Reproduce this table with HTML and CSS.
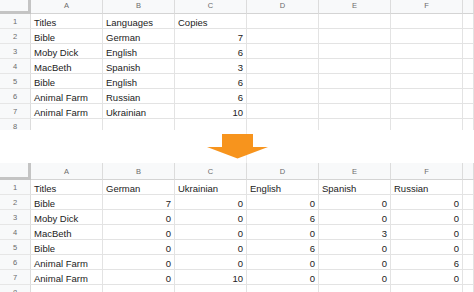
FILE: index.html
```html
<!DOCTYPE html>
<html>
<head>
<meta charset="utf-8">
<link rel="stylesheet" href="styles.css">
</head>
<body>
<div class="page">
  <div class="sheet sheet-top">
    <div class="hd corner"></div>
    <div class="hd col">A</div><div class="hd col">B</div><div class="hd col">C</div><div class="hd col">D</div><div class="hd col">E</div><div class="hd col">F</div><div class="hd col"></div>

    <div class="rn">1</div><div class="c">Titles</div><div class="c">Languages</div><div class="c">Copies</div><div class="c"></div><div class="c"></div><div class="c"></div><div class="c"></div>
    <div class="rn">2</div><div class="c">Bible</div><div class="c">German</div><div class="c n">7</div><div class="c"></div><div class="c"></div><div class="c"></div><div class="c"></div>
    <div class="rn">3</div><div class="c">Moby Dick</div><div class="c">English</div><div class="c n">6</div><div class="c"></div><div class="c"></div><div class="c"></div><div class="c"></div>
    <div class="rn">4</div><div class="c">MacBeth</div><div class="c">Spanish</div><div class="c n">3</div><div class="c"></div><div class="c"></div><div class="c"></div><div class="c"></div>
    <div class="rn">5</div><div class="c">Bible</div><div class="c">English</div><div class="c n">6</div><div class="c"></div><div class="c"></div><div class="c"></div><div class="c"></div>
    <div class="rn">6</div><div class="c">Animal Farm</div><div class="c">Russian</div><div class="c n">6</div><div class="c"></div><div class="c"></div><div class="c"></div><div class="c"></div>
    <div class="rn">7</div><div class="c">Animal Farm</div><div class="c">Ukrainian</div><div class="c n">10</div><div class="c"></div><div class="c"></div><div class="c"></div><div class="c"></div>
    <div class="rn">8</div><div class="c"></div><div class="c"></div><div class="c"></div><div class="c"></div><div class="c"></div><div class="c"></div><div class="c"></div>
  </div>

  <div class="gap">
    <svg class="arrow" width="474" height="33" viewBox="0 0 474 33">
      <line x1="246.5" y1="0" x2="246.5" y2="33" stroke="#ececec" stroke-width="1"/>
      <polygon points="222,4 253,4 253,17 268,17 237.5,28.5 207,17 222,17" fill="#f7941d"/>
    </svg>
  </div>

  <div class="sheet sheet-bottom">
    <div class="hd corner"></div>
    <div class="hd col">A</div><div class="hd col">B</div><div class="hd col">C</div><div class="hd col">D</div><div class="hd col">E</div><div class="hd col">F</div><div class="hd col"></div>

    <div class="rn">1</div><div class="c">Titles</div><div class="c">German</div><div class="c">Ukrainian</div><div class="c">English</div><div class="c">Spanish</div><div class="c">Russian</div><div class="c"></div>
    <div class="rn">2</div><div class="c">Bible</div><div class="c n">7</div><div class="c n">0</div><div class="c n">0</div><div class="c n">0</div><div class="c n">0</div><div class="c"></div>
    <div class="rn">3</div><div class="c">Moby Dick</div><div class="c n">0</div><div class="c n">0</div><div class="c n">6</div><div class="c n">0</div><div class="c n">0</div><div class="c"></div>
    <div class="rn">4</div><div class="c">MacBeth</div><div class="c n">0</div><div class="c n">0</div><div class="c n">0</div><div class="c n">3</div><div class="c n">0</div><div class="c"></div>
    <div class="rn">5</div><div class="c">Bible</div><div class="c n">0</div><div class="c n">0</div><div class="c n">6</div><div class="c n">0</div><div class="c n">0</div><div class="c"></div>
    <div class="rn">6</div><div class="c">Animal Farm</div><div class="c n">0</div><div class="c n">0</div><div class="c n">0</div><div class="c n">0</div><div class="c n">6</div><div class="c"></div>
    <div class="rn">7</div><div class="c">Animal Farm</div><div class="c n">0</div><div class="c n">10</div><div class="c n">0</div><div class="c n">0</div><div class="c n">0</div><div class="c"></div>
    <div class="rn">8</div><div class="c"></div><div class="c"></div><div class="c"></div><div class="c"></div><div class="c"></div><div class="c"></div><div class="c"></div>
  </div>
</div>
</body>
</html>
```

FILE: styles.css
```css
html, body {
  margin: 0;
  padding: 0;
  background: #ffffff;
  overflow: hidden;
}

.page {
  width: 474px;
  height: 292px;
  overflow: hidden;
  display: flex;
  flex-direction: column;
  font-family: "Liberation Sans", Arial, sans-serif;
}

.sheet {
  display: grid;
  grid-template-columns: 31px repeat(6, 72px) 1fr;
  grid-template-rows: 17px;
  grid-auto-rows: 15px;
  overflow: hidden;
  flex: none;
}

.sheet-top {
  margin-top: -3px;
  height: 133px;
}

.sheet-bottom {
  height: 129px;
}

.gap {
  height: 33px;
  flex: none;
}

.arrow {
  display: block;
}

.hd {
  box-sizing: border-box;
  background: #f8f9fa;
  border-right: 1px solid #dcdcdc;
  border-bottom: 1px solid #d4d4d4;
  color: #6b6b6b;
  font-size: 7.5px;
  display: flex;
  align-items: center;
  justify-content: center;
}

.hd.corner {
  border-right: 3px solid #c4c4c4;
  border-bottom: 3px solid #c4c4c4;
}

.rn {
  box-sizing: border-box;
  background: #f8f9fa;
  border-right: 1px solid #dcdcdc;
  border-bottom: 1px solid #e6e6e6;
  color: #6b6b6b;
  font-size: 7.5px;
  display: flex;
  align-items: center;
  justify-content: center;
}

.c {
  box-sizing: border-box;
  border-right: 1px solid #e3e3e3;
  border-bottom: 1px solid #e3e3e3;
  color: #222222;
  font-size: 9.5px;
  line-height: 11px;
  padding: 3px 3px 0 3px;
  white-space: nowrap;
  overflow: hidden;
}

.c.n {
  text-align: right;
}
```
